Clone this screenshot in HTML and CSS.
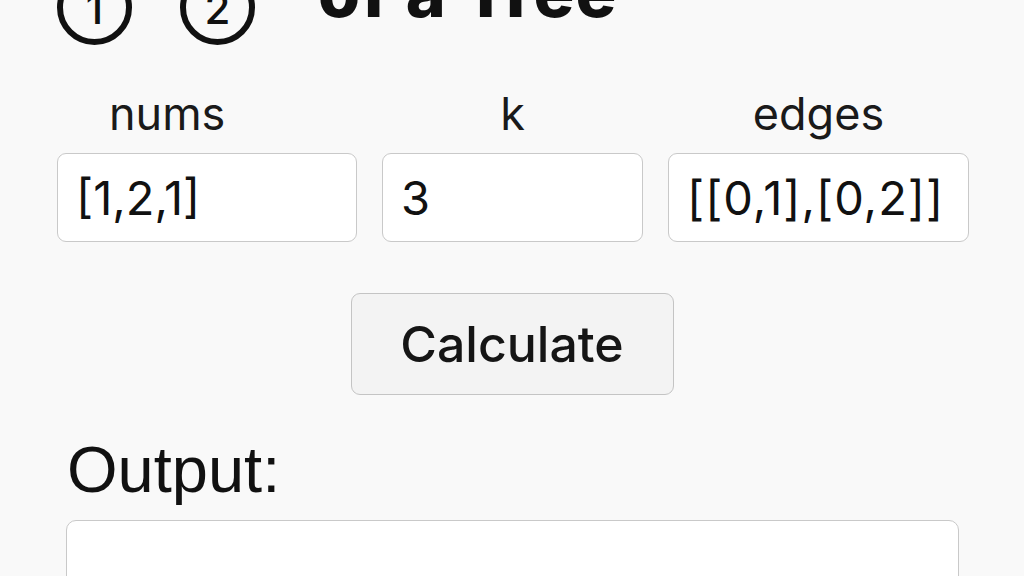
FILE: index.html
```html
<!DOCTYPE html>
<html lang="en">

<head>
  <meta charset="UTF-8" />
  <meta name="viewport" content="width=device-width, initial-scale=1.0" />
  <title>Tree Calculator</title>
  <link rel="stylesheet" href="styles.css">
</head>

<body>
  <div class="page">
    <div class="header">
      <span class="step">1</span>
      <span class="step">2</span>
      <h1 class="title">of a Tree</h1>
    </div>

    <div class="fields">
      <div class="field">
        <label for="nums" class="field-label label-left">nums</label>
        <input type="text" id="nums" value="[1,2,1]" />
      </div>
      <div class="field">
        <label for="k" class="field-label">k</label>
        <input type="text" id="k" value="3" />
      </div>
      <div class="field">
        <label for="edges" class="field-label">edges</label>
        <input type="text" id="edges" class="wide-text" value="[[0,1],[0,2]]" />
      </div>
    </div>

    <div class="actions">
      <button type="button">Calculate</button>
    </div>

    <div class="output-section">
      <h2 class="output-label">Output:</h2>
      <div class="output-box" id="output"></div>
    </div>
  </div>
</body>

</html>
```

FILE: styles.css
```css
body {
  margin: 0;
  font-family: Inter, "Liberation Sans", Arial, sans-serif;
  background-color: #f9f9f9;
  color: #111;
  overflow: hidden;
  height: 576px;
}

.page {
  width: 1024px;
}

.header {
  display: flex;
  align-items: flex-start;
  height: 75px;
  margin-top: -30px;
  padding-left: 57px;
}

.step {
  box-sizing: border-box;
  width: 75px;
  height: 75px;
  border: 6px solid #111;
  border-radius: 50%;
  display: flex;
  justify-content: center;
  align-items: center;
  padding-top: 2px;
  font-size: 42px;
  font-weight: 500;
  margin-right: 48px;
}

.title {
  margin: -12px 0 0 15px;
  font-size: 68px;
  line-height: 1;
  font-weight: 800;
  letter-spacing: 1px;
}

.fields {
  display: grid;
  grid-template-columns: 300px 261px 301px;
  gap: 25px;
  padding-left: 57px;
  margin-top: 42px;
}

.field {
  display: flex;
  flex-direction: column;
}

.field-label {
  display: block;
  text-align: center;
  font-size: 45px;
  line-height: 1.2;
  margin-bottom: 12px;
  color: #1a1a1a;
}

.label-left {
  text-align: left;
  padding-left: 52px;
}

input[type="text"] {
  box-sizing: border-box;
  height: 89px;
  width: 100%;
  padding: 0 18px;
  background-color: #fff;
  border: 1.5px solid #c9c9c9;
  border-radius: 9px;
  font-family: Inter, "Liberation Sans", Arial, sans-serif;
  font-size: 47px;
  color: #111;
  outline: none;
}

.wide-text {
  letter-spacing: 1px;
}

.actions {
  display: flex;
  justify-content: center;
  margin-top: 51px;
}

button {
  width: 323px;
  height: 102px;
  background-color: #f3f3f3;
  border: 1.5px solid #c4c4c4;
  border-radius: 9px;
  font-family: Inter, "Liberation Sans", Arial, sans-serif;
  font-size: 50px;
  font-weight: 550;
  color: #151515;
  cursor: pointer;
}

button:hover {
  background-color: #ebebeb;
}

.output-section {
  padding-left: 67px;
  margin-top: 36px;
}

.output-label {
  margin: 0 0 11px 0;
  font-family: "Liberation Sans", Arial, sans-serif;
  font-size: 65px;
  line-height: 1.2;
  font-weight: 400;
}

.output-box {
  box-sizing: border-box;
  width: 893px;
  height: 140px;
  margin-left: -1px;
  background-color: #fff;
  border: 1.5px solid #c9c9c9;
  border-radius: 10px;
}
```
